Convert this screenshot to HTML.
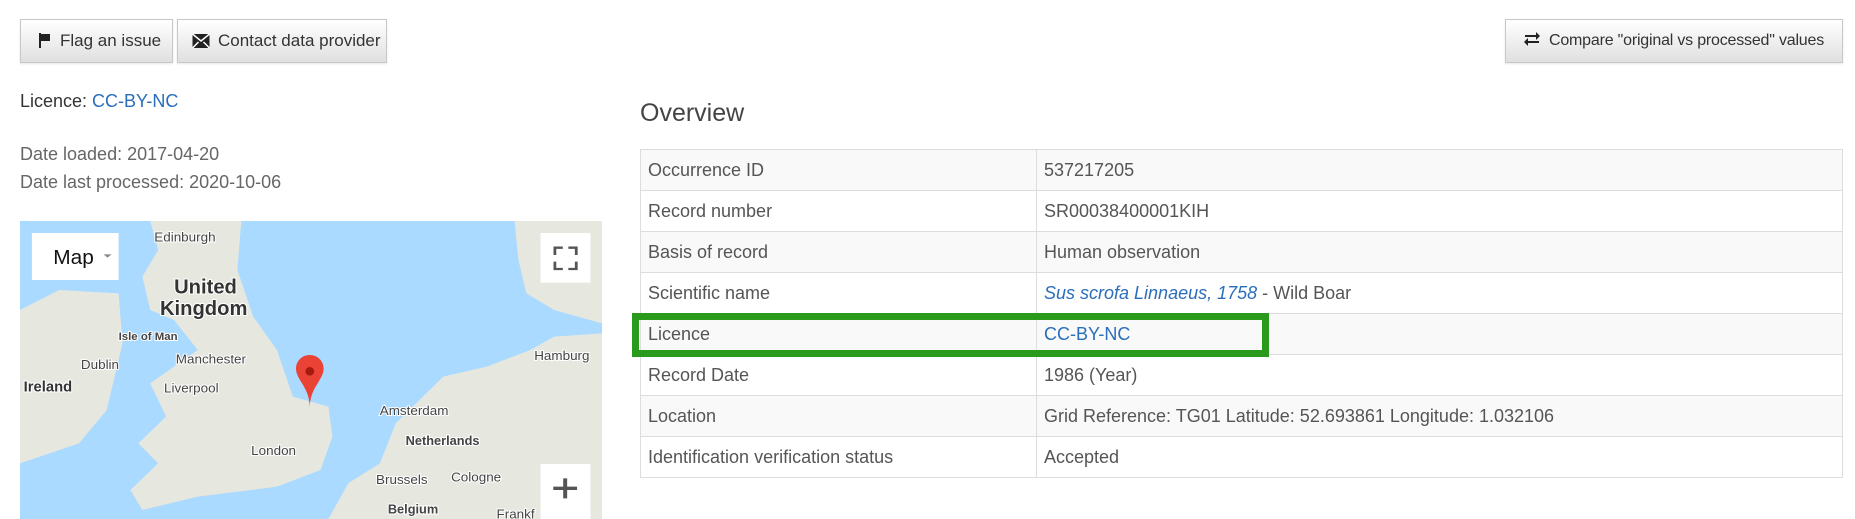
<!DOCTYPE html>
<html><head><meta charset="utf-8"><style>
*{margin:0;padding:0;box-sizing:border-box}
body{width:1855px;height:519px;background:#fff;font-family:"Liberation Sans",sans-serif;color:#555;position:relative;overflow:hidden}
.btn{position:absolute;top:19px;height:44px;border:1px solid #c8c8c8;background:linear-gradient(#fff,#e0e0e0);color:#333;font-size:17px;line-height:42px;padding-left:16px;white-space:nowrap;box-shadow:0 1px 2px rgba(0,0,0,.1);overflow:hidden}
.btn svg{vertical-align:-2px;margin-right:8px}
a{color:#2a6ebb;text-decoration:none}
table{position:absolute;left:640px;top:149px;width:1203px;border-collapse:collapse;table-layout:fixed;font-size:18px}
td{border:1px solid #ddd;height:41px;padding:0 7px;color:#555;white-space:nowrap}
tr:nth-child(odd) td{background:#f9f9f9}
td:first-child{width:396px}
</style></head><body>
<div class="btn" style="left:20px;width:153px;padding-left:17px"><svg width="14" height="16" viewBox="0 0 14 16"><rect x="1" y="1" width="2" height="15" fill="#222"/><path d="M3 2h9v7H3z" fill="#222"/></svg>Flag an issue</div>
<div class="btn" style="left:177px;width:210px;padding-left:14px"><svg width="18" height="14" viewBox="0 0 17 14"><rect x="0" y="0" width="17" height="14" fill="#222"/><path d="M0 0l8.5 7L17 0M0 14l6-6M17 14l-6-6" stroke="#fff" stroke-width="1.5" fill="none"/></svg>Contact data provider</div>
<div class="btn" style="left:1505px;width:338px;padding-left:17px;font-size:16px;letter-spacing:-0.2px"><svg width="18" height="16" viewBox="0 0 18 16"><path d="M2 4h11V1l4 4-4 4V6H2z M16 10H5V7l-4 4 4 4v-3h11z" fill="#222"/></svg>Compare "original vs processed" values</div>

<div style="position:absolute;left:20px;top:91px;font-size:18px;color:#333">Licence: <a>CC-BY-NC</a></div>
<div style="position:absolute;left:20px;top:140px;font-size:18px;line-height:28px;color:#666">Date loaded: 2017-04-20<br>Date last processed: 2020-10-06</div>
<div style="position:absolute;left:640px;top:99px;font-size:25px;color:#444">Overview</div>

<table>
<tr><td>Occurrence ID</td><td>537217205</td></tr>
<tr><td>Record number</td><td>SR00038400001KIH</td></tr>
<tr><td>Basis of record</td><td>Human observation</td></tr>
<tr><td>Scientific name</td><td><a style="font-style:italic">Sus scrofa Linnaeus, 1758</a> - Wild Boar</td></tr>
<tr><td>Licence</td><td><a>CC-BY-NC</a></td></tr>
<tr><td>Record Date</td><td>1986 (Year)</td></tr>
<tr><td>Location</td><td>Grid Reference: TG01 Latitude: 52.693861 Longitude: 1.032106</td></tr>
<tr><td>Identification verification status</td><td>Accepted</td></tr>
</table>
<div style="position:absolute;left:632px;top:313px;width:637px;height:44px;border:7px solid #2a9a1c"></div>

<svg style="position:absolute;left:20px;top:221px" width="582" height="298" viewBox="51 33 1470 894" preserveAspectRatio="none">
<rect x="51" y="33" width="1470" height="894" fill="#aadaff"/>
<g fill="#e6e8e0">
<path d="M380 33L610 33L600 180L640 320L700 420L740 560L830 590L840 680L810 780L700 830L500 860L360 900L330 840L400 760L350 700L420 620L380 520L440 470L500 420L440 330L380 300L360 200L400 120Z"/>
<path d="M51 300L150 240L300 250L310 400L270 600L200 700L51 760Z"/>
<path d="M830 927L880 820L960 760L1000 640L1120 500L1230 470L1340 420L1400 380L1521 370L1521 927Z"/>
<path d="M1300 33L1521 33L1521 340L1400 300L1330 250L1310 150Z"/>
</g>
<g font-family="Liberation Sans,sans-serif" fill="#444" stroke="#fff" stroke-width="6" paint-order="stroke" transform="scale(0.85,1)">
<text x="459" y="95" font-size="40">Edinburgh</text>
<text x="518" y="250" font-size="60" font-weight="bold" fill="#333">United</text>
<text x="476" y="315" font-size="60" font-weight="bold" fill="#333">Kingdom</text>
<text x="353" y="390" font-size="34" font-weight="bold">Isle of Man</text>
<text x="523" y="460" font-size="40">Manchester</text>
<text x="488" y="548" font-size="40">Liverpool</text>
<text x="241" y="477" font-size="40">Dublin</text>
<text x="71" y="545" font-size="44" font-weight="bold" fill="#333">Ireland</text>
<text x="747" y="735" font-size="40">London</text>
<text x="1129" y="615" font-size="40">Amsterdam</text>
<text x="1206" y="705" font-size="38" font-weight="bold">Netherlands</text>
<text x="1118" y="822" font-size="40">Brussels</text>
<text x="1341" y="815" font-size="40">Cologne</text>
<text x="1153" y="910" font-size="38" font-weight="bold">Belgium</text>
<text x="1588" y="450" font-size="40">Hamburg</text>
<text x="1476" y="925" font-size="40">Frankf</text>
</g>
<g transform="translate(783 0) scale(0.85,1) translate(-783 0)">
<path d="M783 435c-23 0-41 18-41 41 0 35 41 55 41 118 0-63 41-83 41-118 0-23-18-41-41-41z" fill="#ea4335"/>
<ellipse cx="783" cy="484" rx="13" ry="13" fill="#a51a10"/>
</g>
<rect x="81" y="69" width="219" height="141" fill="#fff"/>
<text x="135" y="162" font-size="62" font-family="Liberation Sans,sans-serif" fill="#111" transform="translate(135 0) scale(0.85,1) translate(-135 0)">Map</text>
<path d="M262 133h20l-10 10z" fill="#888"/>
<rect x="1366" y="69" width="126" height="149" fill="#fff"/>
<path d="M1402 135v-22h20M1456 135v-22h-20M1402 155v22h20M1456 155v22h-20" stroke="#555" stroke-width="7" fill="none"/>
<rect x="1366" y="762" width="126" height="165" fill="#fff"/>
<path d="M1428 805v60M1398 835h60" stroke="#555" stroke-width="10"/>
</svg>
</body></html>
